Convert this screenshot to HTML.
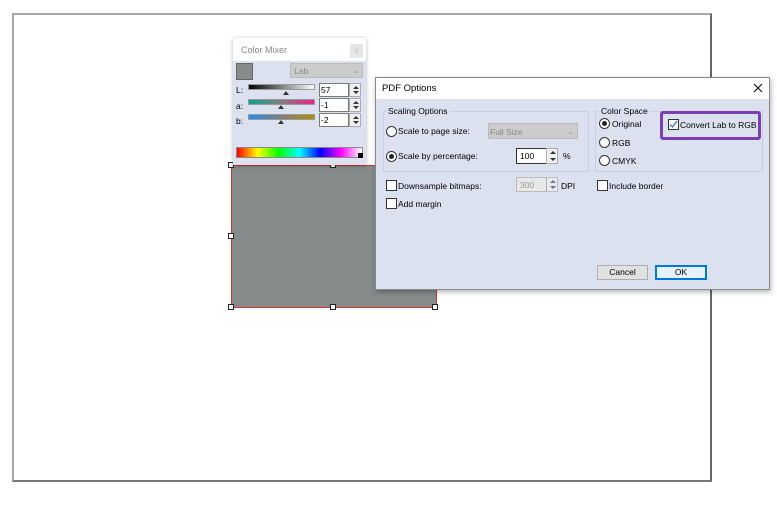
<!DOCTYPE html>
<html><head><meta charset="utf-8"><style>
*{margin:0;padding:0;box-sizing:border-box}
body{width:777px;height:513px;background:#fff;position:relative;overflow:hidden;font-family:"Liberation Sans",sans-serif;font-size:8.5px;color:#000}
.a{position:absolute}
.t{position:absolute;white-space:nowrap;line-height:10px}
.rad{position:absolute;width:11px;height:11px;border:1px solid #333;border-radius:50%;background:#fff}
.rad.on::after{content:"";position:absolute;left:2px;top:2px;width:5px;height:5px;border-radius:50%;background:#222}
.chk{position:absolute;width:11px;height:11px;border:1px solid #333;background:#fff}
.h{position:absolute;width:6px;height:6px;border:1px solid #222;background:#fff}
.inp{position:absolute;background:#fff;border:1px solid #7a7a7a}
.spin{position:absolute;background:#f0f0f0;border:1px solid #aaa}
.spin::before{content:"";position:absolute;left:3px;top:2px;border:3px solid transparent;border-bottom:3px solid #333;border-top:0}
.spin::after{content:"";position:absolute;left:3px;bottom:2px;border:3px solid transparent;border-top:3px solid #333;border-bottom:0}
.tri{position:absolute;border:3px solid transparent;border-bottom:4px solid #333;border-top:0}
</style></head><body>
<div class="a" style="left:12px;top:13px;width:700px;height:469px;border-top:2px solid #a8a8a8;border-left:2px solid #a8a8a8;border-right:2px solid #666;border-bottom:2px solid #777"></div>

<div class="a" style="left:231px;top:165px;width:206px;height:143px;background:#858a8b;border:1px solid #e03030"></div>
<div class="h" style="left:228px;top:162px"></div><div class="h" style="left:330px;top:162px"></div>
<div class="h" style="left:228px;top:233px"></div>
<div class="h" style="left:228px;top:304px"></div><div class="h" style="left:330px;top:304px"></div><div class="h" style="left:432px;top:304px"></div>

<div class="a" style="left:233px;top:38px;width:133px;height:127px;background:#dce1f0;box-shadow:0 1px 4px rgba(0,0,0,.3)"></div>
<div class="a" style="left:233px;top:38px;width:133px;height:23px;background:#fff"></div>
<div class="t" style="left:241px;top:45px;color:#888;font-size:9px">Color Mixer</div>
<div class="a" style="left:350px;top:44px;width:13px;height:14px;background:#e6e6e6;color:#bbb;font-size:8px;text-align:center;line-height:14px">x</div>
<div class="a" style="left:236px;top:63px;width:17px;height:17px;background:#878b8c;border:1px solid #666"></div>
<div class="a" style="left:290px;top:63px;width:73px;height:15px;background:#ccc;border:1px solid #bbb"></div>
<div class="t" style="left:294px;top:66px;color:#888">Lab</div>
<div class="t" style="left:352px;top:65px;color:#999">⌄</div>
<div class="t" style="left:236px;top:85px">L:</div>
<div class="a" style="left:248px;top:84px;width:67px;height:6px;background:linear-gradient(90deg,#000,#fff);border:1px solid #999"></div>
<div class="tri" style="left:283px;top:91px"></div>
<div class="inp" style="left:319px;top:83px;width:30px;height:14px"></div><div class="t" style="left:321px;top:85px">57</div>
<div class="spin" style="left:349px;top:83px;width:12px;height:14px"></div>
<div class="t" style="left:236px;top:101px">a:</div>
<div class="a" style="left:248px;top:99px;width:67px;height:6px;background:linear-gradient(90deg,#10a090,#808080,#f0208a);border:1px solid #999"></div>
<div class="tri" style="left:278px;top:105px"></div>
<div class="inp" style="left:319px;top:98px;width:30px;height:14px"></div><div class="t" style="left:321px;top:100px">-1</div>
<div class="spin" style="left:349px;top:98px;width:12px;height:14px"></div>
<div class="t" style="left:236px;top:116px">b:</div>
<div class="a" style="left:248px;top:114px;width:67px;height:6px;background:linear-gradient(90deg,#2090f0,#808080,#b09000);border:1px solid #999"></div>
<div class="tri" style="left:278px;top:120px"></div>
<div class="inp" style="left:319px;top:113px;width:30px;height:14px"></div><div class="t" style="left:321px;top:115px">-2</div>
<div class="spin" style="left:349px;top:113px;width:12px;height:14px"></div>
<div class="a" style="left:236px;top:147px;width:127px;height:11px;border:1px solid #888;background:linear-gradient(90deg,#f00,#ff0,#0f0,#0ff,#00f,#f0f,#fff)"></div>
<div class="a" style="left:358px;top:153px;width:5px;height:5px;background:#000"></div>

<div class="a" style="left:375px;top:77px;width:395px;height:213px;background:#dce1f0;border:1px solid #8a8a8a;box-shadow:1px 2px 5px rgba(0,0,0,.3)"></div>
<div class="a" style="left:376px;top:78px;width:393px;height:21px;background:#fff"></div>
<div class="t" style="left:382px;top:84px;font-size:9.5px">PDF Options</div>
<svg class="a" style="left:753px;top:83px" width="10" height="10" viewBox="0 0 10 10"><path d="M1 1L9 9M9 1L1 9" stroke="#000" stroke-width="1"/></svg>

<div class="a" style="left:383px;top:111px;width:206px;height:61px;border:1px solid #c8cde0"></div>
<div class="t" style="left:386px;top:106px;background:#dce1f0;padding:0 2px">Scaling Options</div>
<div class="rad" style="left:386px;top:126px"></div><div class="t" style="left:398px;top:126px">Scale to page size:</div>
<div class="a" style="left:488px;top:123px;width:90px;height:16px;background:#ccc;border:1px solid #bbb"></div>
<div class="t" style="left:490px;top:127px;color:#888">Full Size</div>
<div class="t" style="left:567px;top:126px;color:#999">⌄</div>
<div class="rad on" style="left:386px;top:151px"></div><div class="t" style="left:398px;top:151px">Scale by percentage:</div>
<div class="inp" style="left:516px;top:148px;width:31px;height:16px;border-color:#333"></div><div class="t" style="left:520px;top:151px">100</div>
<div class="spin" style="left:546px;top:148px;width:12px;height:16px"></div>
<div class="t" style="left:563px;top:151px">%</div>

<div class="a" style="left:595px;top:111px;width:168px;height:61px;border:1px solid #c8cde0"></div>
<div class="t" style="left:599px;top:106px;background:#dce1f0;padding:0 2px">Color Space</div>
<div class="rad on" style="left:599px;top:118px"></div><div class="t" style="left:612px;top:119px">Original</div>
<div class="rad" style="left:599px;top:137px"></div><div class="t" style="left:612px;top:138px">RGB</div>
<div class="rad" style="left:599px;top:155px"></div><div class="t" style="left:612px;top:156px">CMYK</div>
<div class="a" style="left:660px;top:111px;width:101px;height:29px;border:3px solid #7a3fb5;border-radius:3px"></div>
<div class="chk" style="left:668px;top:119px"></div>
<svg class="a" style="left:668px;top:119px" width="11" height="11" viewBox="0 0 11 11"><path d="M2 5.5L4.5 8L9 2" stroke="#2a6bd0" stroke-width="1.2" fill="none"/></svg>
<div class="t" style="left:680px;top:120px">Convert Lab to RGB</div>

<div class="chk" style="left:386px;top:180px"></div><div class="t" style="left:398px;top:181px">Downsample bitmaps:</div>
<div class="a" style="left:516px;top:177px;width:31px;height:15px;background:#e8e8e8;border:1px solid #bbb"></div><div class="t" style="left:520px;top:180px;color:#999">300</div>
<div class="spin" style="left:546px;top:177px;width:12px;height:15px;opacity:.6"></div>
<div class="t" style="left:561px;top:181px">DPI</div>
<div class="chk" style="left:597px;top:180px"></div><div class="t" style="left:609px;top:181px">Include border</div>
<div class="chk" style="left:386px;top:198px"></div><div class="t" style="left:398px;top:199px">Add margin</div>

<div class="a" style="left:597px;top:265px;width:51px;height:15px;background:#e1e1e1;border:1px solid #adadad;text-align:center;line-height:13px">Cancel</div>
<div class="a" style="left:655px;top:265px;width:52px;height:15px;background:#e5f1fb;border:2px solid #0078d7;text-align:center;line-height:11px">OK</div>
</body></html>
